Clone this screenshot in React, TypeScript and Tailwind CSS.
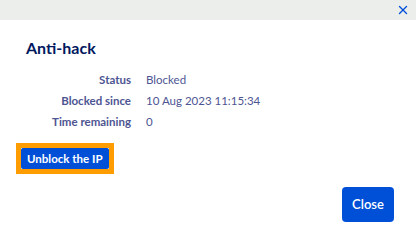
import { X } from "lucide-react";

export default function App() {
  const rows = [
    ["Status", "Blocked"],
    ["Blocked since", "10 Aug 2023 11:15:34"],
    ["Time remaining", "0"],
  ];

  return (
    <div
      className="w-[416px] h-[238px] bg-white flex flex-col"
      style={{ fontFamily: "Lato, 'Liberation Sans', sans-serif" }}
    >
      <div className="h-5 bg-[#eceeec] flex items-center justify-end pr-[6px]">
        <X className="w-[14px] h-[14px] text-[#0050d7]" strokeWidth={2.4} />
      </div>

      <div className="flex-1 flex flex-col px-[26px]">
        <h1 className="mt-[18px] text-[16px] font-bold text-[#00185e] leading-5">
          Anti-hack
        </h1>

        <div className="mt-[15px] grid grid-cols-[105px_1fr] gap-x-[15px] gap-y-[7px] text-[11.5px] text-[#4d5592] leading-[14px]">
          {rows.map(([label, value]) => (
            <div key={label} className="contents">
              <div className="text-right font-bold">{label}</div>
              <div>{value}</div>
            </div>
          ))}
        </div>

        <div className="mt-[14px] -ml-[10px] flex">
          <div className="flex border-[5px] border-[#ff9d00] bg-white">
            <button className="bg-[#0050d7] text-white font-bold text-[11.5px] rounded-[2px] px-[6px] h-[21px] leading-[21px]">
              Unblock the IP
            </button>
          </div>
        </div>

        <div className="flex justify-end mt-[13px] -mr-[4px]">
          <button className="bg-[#0050d7] text-white font-semibold text-[13px] rounded-[4px] w-[52px] h-[35px]">
            Close
          </button>
        </div>
      </div>
    </div>
  );
}
